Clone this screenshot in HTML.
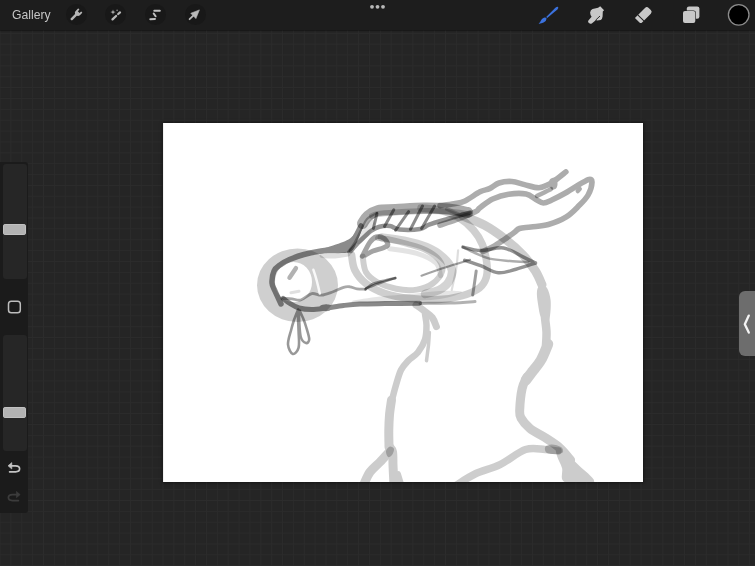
<!DOCTYPE html>
<html><head><meta charset="utf-8">
<style>
html,body{margin:0;padding:0;}
body{width:755px;height:566px;overflow:hidden;position:relative;background:#252525;font-family:"Liberation Sans",sans-serif;}
#grid{position:absolute;left:0;top:0;}
#top{position:absolute;left:0;top:0;width:755px;height:29.5px;background:#1d1d1d;box-shadow:0 1px 1px rgba(0,0,0,.35);}
#gal{position:absolute;left:12.4px;top:7.7px;font-size:12.2px;color:#c6c6c6;line-height:14px;-webkit-font-smoothing:antialiased;will-change:transform;}
.ic{position:absolute;top:4px;width:21px;height:21px;border-radius:50%;background:#181818;}
#canvas{position:absolute;left:163px;top:123px;width:480px;height:359px;background:#fff;box-shadow:0 0 3px 1px rgba(0,0,0,.4),inset 1px 0 0 #f0f0f0;}
#side{position:absolute;left:-5px;top:162px;width:33px;height:351px;background:#1b1b1b;border-radius:3px;}
.track{position:absolute;left:2.5px;width:24px;background:#262626;border-radius:3px;}
.thumb{position:absolute;left:3px;width:23px;height:11px;background:#b3b3b3;border-radius:3px;box-shadow:0 0 0 .5px #cfcfcf inset;}
#handle{position:absolute;left:739px;top:291px;width:30px;height:65px;background:#6d6d6d;border-radius:6px;}
</style></head><body>
<svg id="grid" width="755" height="566"><path d="M0.04 29V566M10.91 29V566M21.77 29V566M32.63 29V566M43.50 29V566M54.37 29V566M65.23 29V566M76.09 29V566M86.96 29V566M97.83 29V566M108.69 29V566M119.56 29V566M130.42 29V566M141.28 29V566M152.15 29V566M163.01 29V566M173.88 29V566M184.75 29V566M195.61 29V566M206.47 29V566M217.34 29V566M228.21 29V566M239.07 29V566M249.94 29V566M260.80 29V566M271.66 29V566M282.53 29V566M293.39 29V566M304.26 29V566M315.12 29V566M325.99 29V566M336.86 29V566M347.72 29V566M358.58 29V566M369.45 29V566M380.31 29V566M391.18 29V566M402.05 29V566M412.91 29V566M423.78 29V566M434.64 29V566M445.50 29V566M456.37 29V566M467.24 29V566M478.10 29V566M488.97 29V566M499.83 29V566M510.69 29V566M521.56 29V566M532.42 29V566M543.29 29V566M554.15 29V566M565.02 29V566M575.88 29V566M586.75 29V566M597.62 29V566M608.48 29V566M619.35 29V566M630.21 29V566M641.08 29V566M651.94 29V566M662.81 29V566M673.67 29V566M684.53 29V566M695.40 29V566M706.26 29V566M717.13 29V566M728.00 29V566M738.86 29V566M749.73 29V566M0 33.30H755M0 44.16H755M0 55.03H755M0 65.89H755M0 76.76H755M0 87.62H755M0 98.49H755M0 109.36H755M0 120.22H755M0 131.08H755M0 141.95H755M0 152.81H755M0 163.68H755M0 174.55H755M0 185.41H755M0 196.27H755M0 207.14H755M0 218.00H755M0 228.87H755M0 239.74H755M0 250.60H755M0 261.46H755M0 272.33H755M0 283.19H755M0 294.06H755M0 304.93H755M0 315.79H755M0 326.66H755M0 337.52H755M0 348.38H755M0 359.25H755M0 370.12H755M0 380.98H755M0 391.85H755M0 402.71H755M0 413.58H755M0 424.44H755M0 435.31H755M0 446.17H755M0 457.04H755M0 467.90H755M0 478.77H755M0 489.63H755M0 500.50H755M0 511.36H755M0 522.23H755M0 533.09H755M0 543.96H755M0 554.82H755M0 565.68H755" stroke="#2c2c2c" stroke-width="1" fill="none"/></svg>
<div id="top">
  <div id="gal">Gallery</div>
  <div class="ic" style="left:66px"></div>
  <div class="ic" style="left:105px"></div>
  <div class="ic" style="left:144.5px"></div>
  <div class="ic" style="left:184.5px"></div>
</div>
<svg id="icons" width="755" height="30" style="position:absolute;left:0;top:0">
  <g fill="#b9b9b9" stroke="none">
    <circle cx="372" cy="6.8" r="1.9"/><circle cx="377.5" cy="6.8" r="1.9"/><circle cx="383" cy="6.8" r="1.9"/>
  </g>
  <!-- wrench -->
  <g transform="translate(75.7 15.1) rotate(45)" fill="#b5b5b5">
    <rect x="-1.25" y="-1.5" width="2.5" height="8.3" rx="1.2"/>
    <path d="M-3 -6.3 L-3 -3.3 A3 3 0 0 0 3 -3.3 L3 -6.3 Q2.2 -6.9 1.2 -6.4 L1.2 -4.2 L-1.2 -4.2 L-1.2 -6.4 Q-2.2 -6.9 -3 -6.3 Z"/>
  </g>
  <!-- wand -->
  <g stroke="#b9b9b9" stroke-linecap="round" fill="none">
    <line x1="112.5" y1="19.4" x2="116.1" y2="16" stroke-width="2.3"/>
    <line x1="118.2" y1="14" x2="120" y2="12.4" stroke-width="2.3"/>
  </g>
  <path d="M113 9.4 L113.6 11.5 L115.7 12.1 L113.6 12.7 L113 14.8 L112.4 12.7 L110.3 12.1 L112.4 11.5Z" fill="#b9b9b9"/>
  <circle cx="117.1" cy="10.4" r="0.8" fill="#8a8a8a"/>
  <!-- selection S -->
  <g stroke="#c0c0c0" stroke-width="2" stroke-linecap="round" fill="none">
    <line x1="154.3" y1="10.7" x2="159.8" y2="10.7"/>
    <line x1="153.7" y1="13.5" x2="155.6" y2="16.3"/>
    <line x1="150.3" y1="19.2" x2="155" y2="18.9"/>
  </g>
  <!-- arrow -->
  <line x1="189.6" y1="19.2" x2="194" y2="14.8" stroke="#b9b9b9" stroke-width="1.8" stroke-linecap="round"/>
  <path d="M199.4 9.9 L190.8 13.3 L195.9 18.6 Z" fill="#b9b9b9" stroke="#b9b9b9" stroke-width="0.6" stroke-linejoin="round"/>
  <!-- brush -->
  <g fill="#3b72de">
    <path d="M558.2 6.9 Q558.6 8 557.4 9.6 L547.2 18 L546.2 17 L555.4 7.8 Q557 6.4 558.2 6.9Z"/>
    <path d="M546.6 18.6 Q546.6 21 543.6 22.6 Q541 23.8 538.6 23.6 Q540.4 22.4 540.8 20.8 Q541.6 18.6 543.8 17.8 Q545.8 17.2 546.6 18.6Z"/>
  </g>
  <!-- smudge -->
  <path d="M600.2 6.2 L604.1 10.2 L602.8 11.5 L602.6 16.6 Q602.3 19.2 600.7 20 L597.3 20.4 Q596.4 20.4 596 20 L591.8 23.4 Q589.6 24.3 588.4 22.6 Q587.7 21.4 588.4 20.6 L591.6 16.8 Q590.3 15.4 590.1 12.4 Q590.5 9.4 592.6 8.9 L598.1 7.7 Z" fill="#c8c8c8"/>
  <line x1="600" y1="16" x2="595.6" y2="20.2" stroke="#1d1d1d" stroke-width="0.9"/>
  <!-- eraser -->
  <g transform="translate(643.8 14.9) rotate(-45)">
    <path d="M-8.4 -4.1 H5.8 A2.6 2.6 0 0 1 8.4 -1.5 V1.5 A2.6 2.6 0 0 1 5.8 4.1 H-6.6 A1.8 1.8 0 0 1 -8.4 2.3 Z" fill="#c8c8c8"/>
    <rect x="-4.7" y="-4.3" width="0.95" height="8.6" fill="#1d1d1d"/>
  </g>
  <!-- layers -->
  <rect x="686.8" y="6.4" width="12.6" height="12.4" rx="2.2" fill="#c8c8c8" stroke="#1d1d1d" stroke-width="0"/>
  <rect x="682.3" y="10.5" width="13.6" height="13.1" rx="2.4" fill="#1d1d1d"/>
  <rect x="683" y="11.1" width="12.3" height="11.9" rx="2" fill="#c8c8c8"/>
  <!-- color -->
  <circle cx="738.7" cy="14.85" r="10.3" fill="#000" stroke="#8c8c8c" stroke-width="1.3"/>
</svg>
<div id="canvas"></div>
<svg id="sk" width="480" height="359" viewBox="163 123 480 359" style="position:absolute;left:163px;top:123px" fill="none" stroke="#000" stroke-linecap="round" stroke-linejoin="round"><g opacity="0.19"><path fill="#000" stroke="none" fill-rule="evenodd" d="M257 285.2a40.5 36.8 0 1 0 81 0a40.5 36.8 0 1 0 -81 0Z M275 282a18.5 20 0 1 0 37 0a18.5 20 0 1 0 -37 0Z"/></g><g opacity="0.19"><path d="M351.6 255.0C352.1 257.5 352.4 265.2 354.8 270.0C357.2 274.8 360.9 279.6 365.9 283.5C370.9 287.4 377.6 291.0 385.0 293.5C392.4 296.0 401.4 297.5 410.4 298.5C419.4 299.5 430.5 299.9 439.0 299.5C447.5 299.1 454.6 297.9 461.3 296.0C468.0 294.1 475.2 291.2 479.4 288.0C483.6 284.8 485.2 281.2 486.4 277.0C487.6 272.8 487.5 268.4 486.8 263.0C486.1 257.6 484.6 249.9 482.4 244.5C480.2 239.1 477.4 234.7 473.6 230.3C469.8 225.9 465.0 221.3 459.4 218.0C453.8 214.7 446.4 212.2 440.0 210.5C433.6 208.8 424.2 208.4 421.0 208.0" stroke-width="7.5"/></g><g opacity="0.19"><path d="M362.7 256.6C363.2 259.2 363.5 267.8 365.9 272.0C368.3 276.2 372.0 279.2 377.0 282.0C382.0 284.8 389.5 287.5 396.1 288.8C402.7 290.1 410.7 290.5 416.8 289.6C422.9 288.7 428.5 286.6 432.7 283.5C436.9 280.4 441.1 274.9 442.2 271.0C443.2 267.1 441.6 263.2 439.0 259.8C436.4 256.4 431.6 253.0 426.3 250.3C421.0 247.7 413.6 245.8 407.2 243.9C400.8 242.0 393.1 240.1 388.2 239.1C383.3 238.1 379.7 238.2 378.0 238.0" stroke-width="6"/></g><g opacity="0.17"><path d="M381.8 237.5C385.5 238.0 396.6 239.1 404.0 240.7C411.4 242.3 419.9 244.3 426.3 247.0C432.7 249.7 438.0 252.9 442.2 256.6C446.4 260.3 450.6 265.1 451.7 269.3C452.8 273.5 450.7 278.6 448.6 282.0C446.5 285.4 442.9 288.0 439.0 290.0C435.1 292.0 427.3 293.3 425.0 294.0" stroke-width="8.5"/></g><g opacity="0.11"><path d="M389.7 248.7C394.2 249.5 409.1 251.0 416.8 253.4C424.5 255.8 431.9 259.3 435.9 263.0C439.9 266.7 439.8 273.6 440.6 275.7" stroke-width="5"/></g><g opacity="0.13"><path d="M458.1 250.3C457.8 253.6 457.1 263.4 456.0 270.0C454.9 276.6 452.4 286.7 451.7 290.0" stroke-width="2.2"/></g><g opacity="0.195"><path d="M463.0 216.2C466.5 217.7 477.1 221.2 484.2 225.0C491.3 228.8 498.9 234.2 505.4 239.2C511.9 244.2 518.0 249.7 523.0 255.0C528.0 260.3 532.2 266.0 535.4 271.0C538.6 276.0 540.9 282.5 542.0 284.8" stroke-width="9"/><path d="M537.0 291.0C537.5 287.7 539.3 284.5 541.0 284.0C542.7 283.5 545.4 285.3 547.0 288.0C548.6 290.7 550.1 295.3 550.6 300.0C551.1 304.7 550.6 312.0 550.0 316.0C549.4 320.0 548.5 323.7 547.0 324.0C545.5 324.3 542.5 321.3 541.0 318.0C539.5 314.7 538.7 308.5 538.0 304.0C537.3 299.5 536.5 294.3 537.0 291.0Z" fill="#000" stroke="none"/><path d="M545.0 318.0C545.2 320.3 546.3 327.3 546.5 331.8C546.7 336.3 546.1 342.8 546.0 345.0" stroke-width="8.5"/><path d="M548.0 344.0C546.8 346.7 543.7 355.3 541.0 360.0C538.3 364.7 534.5 368.7 532.0 372.0C529.5 375.3 527.0 378.7 526.0 380.0" stroke-width="10.5"/><path d="M527.0 377.0C526.2 378.9 523.3 383.2 522.1 388.7C520.9 394.2 519.9 405.1 519.7 410.0C519.5 414.9 519.3 414.9 521.0 418.0C522.7 421.1 526.0 425.2 530.0 428.5C534.0 431.8 540.0 434.2 545.0 437.5C550.0 440.8 555.7 444.2 560.0 448.0C564.3 451.8 568.8 458.0 570.6 460.0" stroke-width="9"/><path d="M556.0 446.0C557.0 444.9 559.3 446.4 563.0 449.5C566.7 452.6 572.8 459.2 578.0 464.6C583.2 470.0 596.2 479.1 594.0 482.0C591.8 484.9 569.9 484.3 564.6 482.0C559.3 479.7 563.3 472.3 562.0 468.0C560.7 463.7 558.0 459.7 557.0 456.0C556.0 452.3 555.0 447.1 556.0 446.0Z" fill="#000" stroke="none"/><path d="M447.0 209.0L463.0 216.2" stroke-width="4"/></g><g opacity="0.195"><path d="M416.0 305.0C417.3 305.9 421.0 308.4 423.7 310.5C426.4 312.6 430.1 314.8 432.2 317.5C434.3 320.2 435.7 325.2 436.4 326.7" stroke-width="7"/><path d="M425.0 314.0C425.2 315.9 426.5 321.1 426.5 325.3C426.5 329.6 426.4 335.0 425.0 339.5C423.6 344.0 420.8 348.7 418.0 352.2C415.2 355.7 411.0 357.7 408.2 360.7C405.4 363.7 403.0 365.9 401.0 370.0C399.0 374.1 397.6 379.7 396.0 385.0C394.4 390.3 392.2 399.2 391.5 402.0" stroke-width="6.5"/><path d="M391.5 400.0C391.2 402.5 389.9 410.0 389.5 415.0C389.1 420.0 388.9 424.7 388.8 430.0C388.7 435.3 389.0 444.2 389.0 447.0" stroke-width="9"/><path d="M429.4 332.4C429.2 334.5 429.0 340.3 428.5 345.0C428.0 349.7 426.8 358.1 426.5 360.7" stroke-width="3.5"/><path d="M389.5 447.0C390.0 447.8 391.9 449.0 392.5 452.0C393.1 455.0 392.8 460.8 393.0 465.0C393.2 469.2 393.4 474.1 393.6 477.4C393.8 480.7 393.9 483.7 394.0 485.0" stroke-width="9"/><path d="M390.0 451.0C388.3 452.8 383.3 458.5 380.0 462.0C376.7 465.5 372.7 468.3 370.0 472.0C367.3 475.7 365.0 482.0 364.0 484.0" stroke-width="9"/><path d="M398.0 474.0L401.0 484.0" stroke-width="6"/></g><g opacity="0.195"><path d="M455.0 486.0C458.3 484.0 467.5 477.6 475.0 474.0C482.5 470.4 491.6 468.7 500.0 464.6C508.4 460.5 518.0 452.0 525.5 449.5C533.0 447.0 539.6 449.2 545.0 449.5C550.4 449.8 555.8 450.8 558.0 451.0" stroke-width="7.5"/></g><g opacity="0.22"><path d="M546.0 446.0C547.2 445.1 549.5 444.3 552.0 444.5C554.5 444.7 559.2 445.8 561.0 447.0C562.8 448.2 563.5 450.8 563.0 452.0C562.5 453.2 560.5 453.8 558.0 454.0C555.5 454.2 550.2 454.2 548.0 453.5C545.8 452.8 545.3 451.2 545.0 450.0C544.7 448.8 544.8 446.9 546.0 446.0Z" fill="#000" stroke="none"/></g><g opacity="0.22"><path d="M386.0 451.0C386.3 449.2 388.7 446.8 390.0 446.5C391.3 446.2 393.7 447.6 394.0 449.0C394.3 450.4 393.0 453.7 392.0 455.0C391.0 456.3 389.0 457.7 388.0 457.0C387.0 456.3 385.7 452.8 386.0 451.0Z" fill="#000" stroke="none"/></g><g opacity="0.45"><path d="M281.0 304.0C280.0 301.8 276.5 294.5 275.0 291.0C273.5 287.5 272.2 286.3 272.0 283.0C271.8 279.7 272.7 274.0 274.0 271.0C275.3 268.0 277.4 266.9 280.0 265.0C282.6 263.1 285.5 261.2 289.5 259.5C293.5 257.8 298.6 255.9 303.9 254.5C309.1 253.1 316.0 251.8 321.0 251.0C326.0 250.2 329.9 250.0 333.8 249.5C337.7 249.0 341.4 249.1 344.4 248.0C347.4 246.9 349.7 245.3 351.8 243.0C353.9 240.7 355.5 236.8 357.0 234.0C358.5 231.2 360.3 227.3 361.0 226.0" stroke-width="5.5"/><path d="M320.0 250.0C321.8 248.8 329.2 246.8 333.0 245.5C336.8 244.2 340.2 243.2 343.0 242.0C345.8 240.8 348.0 240.0 350.0 238.5C352.0 237.0 353.5 234.9 355.0 233.0C356.5 231.1 358.0 227.3 359.0 227.0C360.0 226.7 361.3 228.5 361.0 231.0C360.7 233.5 358.7 238.6 357.0 242.0C355.3 245.4 354.2 249.6 351.0 251.5C347.8 253.4 342.8 253.0 338.0 253.2C333.2 253.4 325.0 253.3 322.0 252.8C319.0 252.3 318.2 251.2 320.0 250.0Z" fill="#000" stroke="none"/></g><g opacity="0.1"><path d="M356.0 241.0C356.7 238.3 361.5 231.7 364.0 228.0C366.5 224.3 369.2 219.7 371.0 219.0C372.8 218.3 375.5 221.2 375.0 224.0C374.5 226.8 370.5 232.7 368.0 236.0C365.5 239.3 362.0 243.2 360.0 244.0C358.0 244.8 355.3 243.7 356.0 241.0Z" fill="#000" stroke="none"/></g><g opacity="0.3"><path d="M348.0 252.0C349.2 250.3 352.8 245.8 355.0 242.0C357.2 238.2 359.5 232.8 361.5 229.0C363.5 225.2 364.4 221.7 367.0 219.0C369.6 216.3 375.3 214.0 377.0 213.0" stroke-width="2.2"/></g><g opacity="0.13"><path d="M322.0 255.5C324.2 255.6 330.7 256.2 335.0 256.0C339.3 255.8 345.8 254.3 348.0 254.0" stroke-width="5"/></g><g opacity="0.46"><path d="M283.2 298.4C284.2 299.2 286.9 301.6 289.5 303.2C292.1 304.8 295.3 306.9 299.0 308.0C302.7 309.1 307.3 309.5 311.8 309.5C316.3 309.5 320.7 308.7 326.0 308.0C331.3 307.3 337.9 306.2 343.6 305.5C349.3 304.8 353.1 304.3 360.0 304.0C366.9 303.7 375.1 303.7 385.0 303.6C394.9 303.5 413.8 303.3 419.5 303.2" stroke-width="5"/><path d="M320.0 306.0C320.8 305.0 324.0 304.2 326.0 304.2C328.0 304.2 331.5 304.9 332.0 306.0C332.5 307.1 330.8 310.1 329.0 310.8C327.2 311.5 322.5 311.0 321.0 310.2C319.5 309.4 319.2 307.0 320.0 306.0Z" fill="#000" stroke="none"/></g><g opacity="0.3"><path d="M420.0 303.4C425.0 303.3 440.8 303.3 450.0 303.0C459.2 302.7 470.8 301.8 475.0 301.5" stroke-width="3"/></g><g opacity="0.1"><path d="M352.0 301.0C354.5 299.9 370.3 297.7 380.0 296.5C389.7 295.3 400.0 294.9 410.0 294.0C420.0 293.1 431.3 291.3 440.0 291.0C448.7 290.7 462.0 290.7 462.0 292.0C462.0 293.3 450.3 297.4 440.0 299.0C429.7 300.6 412.5 300.8 400.0 301.5C387.5 302.2 373.0 303.1 365.0 303.0C357.0 302.9 349.5 302.1 352.0 301.0Z" fill="#000" stroke="none"/></g><g opacity="0.34"><path d="M283.2 298.4C284.7 298.5 289.1 298.5 292.0 298.8C294.9 299.1 297.4 300.9 300.7 300.0C304.0 299.1 308.4 294.4 311.8 293.6C315.2 292.8 317.9 295.5 321.4 295.2C324.8 294.9 328.8 293.3 332.5 292.0C336.2 290.7 340.7 288.2 343.6 287.3C346.5 286.4 347.8 286.6 350.0 286.8C352.2 287.1 354.4 288.4 357.0 288.8C359.6 289.2 364.0 289.2 365.4 289.3" stroke-width="2.8"/></g><g opacity="0.4"><path d="M365.4 289.3C366.6 288.4 369.7 285.4 372.5 284.0C375.3 282.6 378.6 282.0 382.4 281.0C386.2 280.0 393.1 278.5 395.3 278.0" stroke-width="2.6"/></g><g opacity="0.3"><path d="M295.9 268.2L289.5 277.7" stroke-width="4.5"/></g><g opacity="0.12"><path d="M291.0 292.8L299.0 291.2" stroke-width="3"/></g><g opacity="0.85"><path d="M313.4 269.8C316 277 318 285 319.8 293.6" stroke="#fff" stroke-width="2.5" opacity="1"/></g><g opacity="0.4"><path d="M298.1 309.5C297.4 311.2 295.1 316.6 294.0 320.0C292.9 323.4 292.2 325.6 291.2 329.7C290.2 333.8 287.7 340.4 288.0 344.5C288.3 348.6 291.0 353.5 292.8 354.0C294.6 354.5 297.6 351.4 298.6 347.7C299.6 344.0 298.8 338.0 298.6 331.8C298.4 325.6 297.8 314.1 297.6 310.6" stroke-width="2.6"/><path d="M299.7 310.6C300.2 311.8 301.9 315.4 303.0 318.0C304.1 320.6 305.0 323.0 306.0 326.5C307.0 330.0 309.2 336.4 309.2 339.2C309.2 341.9 307.4 343.4 306.0 343.0C304.6 342.6 301.9 340.7 300.8 337.0C299.7 333.3 299.5 325.3 299.2 321.0C298.9 316.7 299.0 312.7 299.0 311.0" stroke-width="2.6"/></g><g opacity="0.33"><path d="M362.5 223.5C363.4 222.2 365.4 218.2 368.0 216.0C370.6 213.8 373.4 211.6 378.0 210.5C382.6 209.4 388.0 209.9 395.6 209.5C403.2 209.1 414.6 208.1 423.4 208.0C432.2 207.9 441.2 208.2 448.6 209.0C456.0 209.8 464.5 211.9 467.7 212.5" stroke-width="11"/></g><g opacity="0.2"><path d="M372.0 216.0C373.0 215.7 374.1 214.6 378.0 214.0C381.9 213.4 388.0 213.0 395.6 212.5C403.2 212.0 414.6 211.2 423.4 211.0C432.2 210.8 441.2 211.0 448.6 211.5C456.0 212.0 464.5 213.6 467.7 214.0" stroke-width="6"/></g><g opacity="0.42"><path d="M350.8 251.0C352.3 249.3 356.6 244.3 360.0 241.0C363.4 237.7 367.7 233.4 370.9 231.0C374.1 228.6 376.2 227.6 379.4 226.8C382.6 226.0 386.7 225.6 390.0 226.0C393.3 226.4 394.4 229.0 399.4 229.5C404.4 230.0 415.1 229.8 420.0 229.0C424.9 228.2 424.4 226.4 429.0 224.7C433.6 223.0 440.7 221.0 447.5 219.0C454.3 217.0 466.1 213.7 469.8 212.6" stroke-width="4.5"/></g><g opacity="0.45"><path d="M377.0 213.5L373.4 228.4" stroke-width="3"/><path d="M393.8 209.8L384.5 226.5" stroke-width="3"/><path d="M408.6 211.7L395.6 230.2" stroke-width="3"/><path d="M422.5 206.0L410.5 229.3" stroke-width="3"/><path d="M434.6 206.0L421.6 228.4" stroke-width="3"/></g><g opacity="0.36"><path d="M362.4 256.2C363.6 253.9 367.5 245.6 369.8 242.4C372.1 239.2 373.9 237.7 376.2 237.0C378.5 236.3 381.7 236.9 383.6 238.2C385.6 239.4 387.9 242.9 387.9 244.5C387.9 246.1 386.1 246.6 383.6 247.7C381.1 248.8 376.0 249.8 373.0 251.0C370.0 252.2 366.8 254.3 365.6 255.0" stroke-width="5"/></g><g opacity="0.4"><path d="M365.9 288.4C368.2 287.5 375.1 284.7 380.0 283.0C384.9 281.3 392.8 278.8 395.3 278.0" stroke-width="2.4"/></g><g opacity="0.36"><path d="M421.5 275.7C425.4 274.3 436.9 270.1 445.0 267.5C453.1 264.9 465.8 261.1 470.0 259.8" stroke-width="2.2"/></g><g opacity="0.32"><path d="M440.0 205.6C442.3 205.3 449.8 204.6 454.0 203.8C458.2 203.0 460.7 203.0 465.0 201.0C469.3 199.0 475.9 193.9 480.0 191.8C484.1 189.7 486.3 190.1 489.5 188.6C492.7 187.1 495.3 184.2 499.0 183.0C502.7 181.8 507.6 181.2 511.8 181.5C516.0 181.8 520.0 183.5 524.5 184.6C529.0 185.7 534.8 187.8 538.8 187.8C542.8 187.8 545.8 185.8 548.4 184.6C551.0 183.4 551.8 182.8 554.7 180.7C557.6 178.6 564.0 173.4 565.9 171.9" stroke-width="5.6"/><path d="M549.5 180.0C550.2 178.1 553.7 177.0 555.0 177.5C556.3 178.0 557.3 181.2 557.5 183.0C557.7 184.8 557.1 187.5 556.0 188.5C554.9 189.5 552.1 190.4 551.0 189.0C549.9 187.6 548.8 181.9 549.5 180.0Z" fill="#000" stroke="none"/></g><g opacity="0.32"><path d="M440.0 225.0C442.7 224.1 450.1 221.9 456.0 219.7C461.9 217.5 471.3 213.8 475.3 211.8C479.3 209.8 477.1 209.8 480.0 207.7C482.9 205.6 487.9 201.2 492.7 199.0C497.5 196.8 503.0 195.0 508.6 194.2C514.2 193.4 521.6 193.1 526.1 194.0C530.6 194.9 533.0 198.0 535.9 199.5C538.8 201.0 540.6 202.9 543.3 203.0C545.9 203.1 548.3 201.6 551.8 200.0C555.3 198.4 559.9 196.1 564.5 193.5C569.1 190.9 575.2 186.8 579.3 184.5C583.4 182.2 586.8 179.9 588.9 179.5C591.0 179.1 592.1 179.7 592.0 182.3C591.9 184.9 590.3 191.0 588.1 195.0C585.9 199.0 582.3 202.4 578.6 206.1C574.9 209.8 570.9 214.1 565.9 217.2C560.9 220.3 554.2 222.9 548.4 224.5C542.6 226.1 535.7 226.3 530.9 227.0C526.1 227.7 522.3 227.6 519.5 228.5C516.7 229.4 516.9 230.6 514.2 232.5C511.6 234.4 507.1 237.6 503.6 240.0C500.1 242.4 496.5 244.9 493.0 246.8C489.5 248.7 484.2 250.8 482.4 251.6" stroke-width="5.6"/><path d="M575.5 190.5C575.7 189.3 577.9 186.8 579.0 186.5C580.1 186.2 582.2 187.8 582.0 189.0C581.8 190.2 579.1 193.2 578.0 193.5C576.9 193.8 575.3 191.7 575.5 190.5Z" fill="#000" stroke="none"/></g><g opacity="0.32"><path d="M537.0 196.0C538.5 195.2 543.7 192.7 546.0 191.5C548.3 190.3 550.2 189.4 551.0 189.0" stroke-width="4.5"/></g><g opacity="0.42"><path d="M463.0 247.1C465.9 247.7 473.8 250.3 480.6 250.5C487.4 250.7 496.5 246.9 503.6 248.0C510.7 249.1 517.7 254.4 523.0 256.9C528.3 259.4 533.3 262.0 535.4 263.0" stroke-width="3.5"/><path d="M464.7 260.4C467.4 261.3 475.0 263.6 480.6 265.7C486.2 267.8 492.4 272.2 498.3 272.8C504.2 273.4 509.8 270.8 516.0 269.2C522.2 267.6 532.2 264.0 535.4 263.0" stroke-width="3.5"/></g><g opacity="0.32"><path d="M463.0 247.1C465.0 248.1 470.6 251.1 475.0 253.0C479.4 254.9 483.7 257.3 489.5 258.6C495.3 259.9 503.5 260.4 510.0 261.0C516.5 261.6 525.3 262.0 528.4 262.2" stroke-width="2.5"/></g><g opacity="0.38"><path d="M476.2 271.0C475.9 273.0 475.1 279.0 474.5 283.0C473.9 287.0 473.0 293.0 472.7 295.0" stroke-width="3"/></g></svg>
<div id="side">
  <div class="track" style="top:2px;height:115px;left:7.5px"></div>
  <div class="thumb" style="top:62px;left:8px"></div>
  <div class="track" style="top:173px;height:116px;left:7.5px"></div>
  <div class="thumb" style="top:245px;left:8px"></div>
</div>
<svg width="30" height="520" style="position:absolute;left:0;top:0">
  <rect x="8.5" y="301.2" width="11.8" height="11.6" rx="2.8" fill="none" stroke="#bdbdbd" stroke-width="1.5"/>
  <g fill="none" stroke="#c4c4c4" stroke-width="1.7" stroke-linecap="round">
    <path d="M10.5 465.8 H15.6 Q19.6 465.8 19.6 468.8 Q19.6 471.8 15.6 471.8 H9.6"/>
  </g>
  <path d="M8 465.8 L11.8 462.6 L11.8 469 Z" fill="#c4c4c4" stroke="#c4c4c4" stroke-width="0.6" stroke-linejoin="round"/>
  <g fill="none" stroke="#3c3c3c" stroke-width="1.7" stroke-linecap="round">
    <path d="M17.8 494.6 H12.4 Q8.4 494.6 8.4 497.6 Q8.4 500.6 12.4 500.6 H18.4"/>
  </g>
  <path d="M20.2 494.6 L16.4 491.4 L16.4 497.8 Z" fill="#3c3c3c" stroke="#3c3c3c" stroke-width="0.6" stroke-linejoin="round"/>
</svg>
<div id="handle"></div>
<svg width="20" height="30" style="position:absolute;left:740px;top:309px"><path d="M8.8 6.6 L4.8 15.2 L8.8 23.6" fill="none" stroke="#f4f4f4" stroke-width="2.3" stroke-linecap="round" stroke-linejoin="round"/></svg>
</body></html>
